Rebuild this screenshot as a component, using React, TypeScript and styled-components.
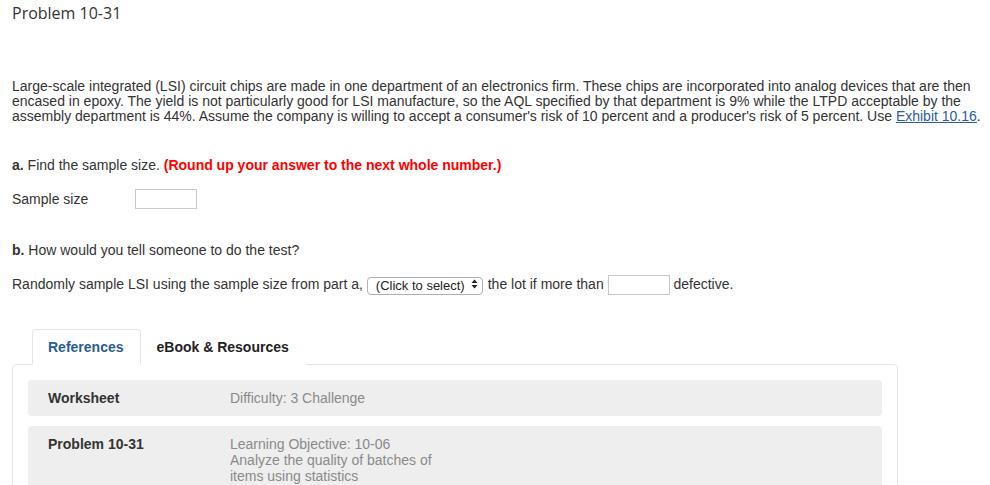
import { FC } from 'react';
import styled, { createGlobalStyle } from 'styled-components';

const GlobalStyle = createGlobalStyle`
	html, body {
		margin: 0;
		padding: 0;
		background: #fff;
	}
	body {
		font-family: 'Liberation Sans', Arial, sans-serif;
		font-size: 14px;
		color: #333;
	}
`;

const Page = styled.div`
	padding: 3px 0 0 12px;
`;

const Title = styled.h1`
	margin: 0;
	font-family: 'Open Sans', 'Liberation Sans', sans-serif;
	font-size: 16px;
	line-height: 20px;
	font-weight: 400;
	color: #333;
`;

const Paragraph = styled.p`
	margin: 56px 0 0;
	line-height: 15px;
`;

const Link = styled.a`
	color: #2b5c9e;
	text-decoration: underline;
`;

const Question = styled.p<{ $top: number }>`
	margin: ${({ $top }) => $top}px 0 0;
	line-height: 15px;
`;

const Hint = styled.span`
	color: #f00;
	font-weight: bold;
`;

const FieldRow = styled.div`
	display: flex;
	align-items: center;
	margin-top: 16px;
	height: 20px;
`;

const FieldLabel = styled.span`
	width: 123px;
`;

const TextInput = styled.input<{ $width?: number }>`
	box-sizing: border-box;
	width: ${({ $width }) => $width ?? 62}px;
	height: 20px;
	border: 1px solid #c8c8c8;
	padding: 0 4px;
	font: inherit;
	vertical-align: middle;
`;

const AnswerLine = styled.div`
	margin-top: 16px;
	line-height: 20px;
	white-space: nowrap;
`;

const SelectWrap = styled.span`
	position: relative;
	display: inline-block;
	vertical-align: middle;
	margin: 0 1px 1px 0;
`;

const Select = styled.select`
	appearance: none;
	box-sizing: border-box;
	width: 116px;
	height: 18px;
	border: 1px solid #b0b0b0;
	border-radius: 4px;
	background: #fff;
	padding: 0 0 1px 8px;
	font-family: 'Liberation Sans', Arial, sans-serif;
	font-size: 13px;
	color: #222;
	line-height: 15px;
`;

const Arrows = styled.svg`
	position: absolute;
	right: 5px;
	top: 4px;
	pointer-events: none;
`;

const Tabs = styled.div`
	margin-top: 33px;
	width: 886px;
`;

const TabList = styled.div`
	display: flex;
	padding-left: 20px;
	margin-bottom: -1px;
	position: relative;
`;

const Tab = styled.div<{ $active?: boolean }>`
	height: 36px;
	box-sizing: border-box;
	padding: 0 16px 0 15px;
	display: flex;
	align-items: center;
	font-weight: bold;
	font-size: 14px;
	color: ${({ $active }) => ($active ? '#2b5c94' : '#222')};
	background: #fff;
	border: 1px solid ${({ $active }) => ($active ? '#e6e6e6' : 'transparent')};
	border-bottom-color: ${({ $active }) => ($active ? '#fff' : 'transparent')};
	border-radius: 4px 4px 0 0;
`;

const Panel = styled.div`
	border: 1px solid #e6e6e6;
	border-radius: 4px;
	padding: 15px;
	height: 130px;
`;

const InfoRow = styled.div`
	display: grid;
	grid-template-columns: 182px 214px;
	padding: 10px 20px;
	margin-bottom: 10px;
	background: #eee;
	border-radius: 4px;
	line-height: 16px;
`;

const InfoName = styled.div`
	font-weight: bold;
	color: #333;
`;

const InfoValue = styled.div`
	color: #8a8a8a;
`;

const App: FC = () => (
	<>
		<GlobalStyle />
		<Page>
			<Title>Problem 10-31</Title>
			<Paragraph>
				Large-scale integrated (LSI) circuit chips are made in one department of an electronics firm.
				These chips are incorporated into analog devices that are then encased in epoxy. The yield is
				not particularly good for LSI manufacture, so the AQL specified by that department is 9% while
				the LTPD acceptable by the assembly department is 44%. Assume the company is willing to accept
				a consumer's risk of 10 percent and a producer's risk of 5 percent. Use{' '}
				<Link href="#">Exhibit 10.16</Link>.
			</Paragraph>

			<Question $top={34}>
				<b>a.</b> Find the sample size. <Hint>(Round up your answer to the next whole number.)</Hint>
			</Question>
			<FieldRow>
				<FieldLabel>Sample size</FieldLabel>
				<TextInput type="text" />
			</FieldRow>

			<Question $top={34}>
				<b>b.</b> How would you tell someone to do the test?
			</Question>
			<AnswerLine>
				Randomly sample LSI using the sample size from part a,{' '}
				<SelectWrap>
					<Select defaultValue="">
						<option value="">(Click to select)</option>
						<option value="accept">accept</option>
						<option value="reject">reject</option>
					</Select>
					<Arrows width="7" height="10" viewBox="0 0 7 10">
						<path d="M3.5 0.5 L6.5 4 H0.5 Z" fill="#222" />
						<path d="M3.5 9.5 L6.5 6 H0.5 Z" fill="#222" />
					</Arrows>
				</SelectWrap>{' '}
				the lot if more than <TextInput type="text" $width={62} /> defective.
			</AnswerLine>

			<Tabs>
				<TabList>
					<Tab $active>References</Tab>
					<Tab>eBook &amp; Resources</Tab>
				</TabList>
				<Panel>
					<InfoRow>
						<InfoName>Worksheet</InfoName>
						<InfoValue>Difficulty: 3 Challenge</InfoValue>
					</InfoRow>
					<InfoRow>
						<InfoName>Problem 10-31</InfoName>
						<InfoValue>
							Learning Objective: 10-06
							<br />
							Analyze the quality of batches of items using statistics
						</InfoValue>
					</InfoRow>
				</Panel>
			</Tabs>
		</Page>
	</>
);

export default App;
